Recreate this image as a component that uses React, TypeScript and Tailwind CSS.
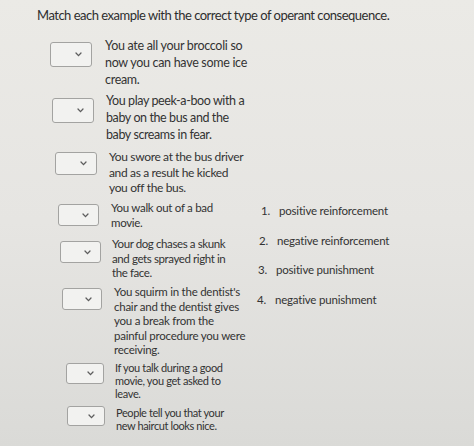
import React from "react";

const items = [
  {
    row: "h-[55px]",
    box: "ml-[50px] mt-[5px] w-[42px] h-[25px]",
    text: "ml-[13px] text-[12.5px] tracking-[-0.3px] leading-[17px]",
    lines: ["You ate all your broccoli so", "now you can have some ice", "cream."],
  },
  {
    row: "h-[57px]",
    box: "ml-[52px] mt-[6px] w-[42px] h-[25px]",
    text: "ml-[12px] text-[12.5px] tracking-[-0.4px] leading-[17px]",
    lines: ["You play peek-a-boo with a", "baby on the bus and the", "baby screams in fear."],
  },
  {
    row: "h-[52px]",
    box: "ml-[55px] mt-[3px] w-[42px] h-[23px]",
    text: "ml-[12px] text-[12px] tracking-[-0.35px] leading-[15.5px]",
    lines: ["You swore at the bus driver", "and as a result he kicked", "you off the bus."],
  },
  {
    row: "h-[36px]",
    box: "ml-[58px] mt-[3px] w-[41px] h-[22px]",
    text: "ml-[12px] text-[11.5px] tracking-[-0.3px] leading-[14.5px]",
    lines: ["You walk out of a bad", "movie."],
  },
  {
    row: "h-[48px]",
    box: "ml-[60px] mt-[4px] w-[41px] h-[22px]",
    text: "ml-[11px] text-[11.5px] tracking-[-0.4px] leading-[14.5px]",
    lines: ["Your dog chases a skunk", "and gets sprayed right in", "the face."],
  },
  {
    row: "h-[76px]",
    box: "ml-[62px] mt-[3px] w-[40px] h-[22px]",
    text: "ml-[12px] text-[11.5px] tracking-[-0.25px] leading-[14.5px]",
    lines: [
      "You squirm in the dentist's",
      "chair and the dentist gives",
      "you a break from the",
      "painful procedure you were",
      "receiving.",
    ],
  },
  {
    row: "h-[45px]",
    box: "ml-[66px] mt-[2px] w-[38px] h-[21px]",
    text: "ml-[11px] text-[11px] tracking-[-0.35px] leading-[13px]",
    lines: ["If you talk during a good", "movie, you get asked to", "leave."],
  },
  {
    row: "h-[40px]",
    box: "ml-[67px] mt-[0px] w-[38px] h-[20px]",
    text: "ml-[11px] text-[11px] tracking-[-0.4px] leading-[13px]",
    lines: ["People tell you that your", "new haircut looks nice."],
  },
];

const answers = [
  { n: "1.", text: "positive reinforcement", cls: "ml-[261px]" },
  { n: "2.", text: "negative reinforcement", cls: "ml-[259px]" },
  { n: "3.", text: "positive punishment", cls: "ml-[258px]" },
  { n: "4.", text: "negative punishment", cls: "ml-[257px]" },
];

function Chevron() {
  return (
    <svg width="7" height="5" viewBox="0 0 7 5" className="mr-[9px]">
      <path d="M1 1 L3.5 3.6 L6 1" fill="none" stroke="#5e5e5e" strokeWidth="1.3" strokeLinecap="round" />
    </svg>
  );
}

export default function App() {
  return (
    <div
      className="w-[474px] h-[446px] overflow-hidden bg-gradient-to-b from-[#ebeae6] via-[#e6e5e2] to-[#dadad7] text-[#333333]"
      style={{ fontFamily: "Lato, 'Open Sans', sans-serif" }}
    >
      <div className="pl-[37px] pt-[6px] h-[37px] text-[13px] tracking-[-0.5px] leading-[18px] text-[#2e2e2e]">
        Match each example with the correct type of operant consequence.
      </div>

      <div className="relative">
        <div className="flex flex-col">
          {items.map((it, i) => (
            <div key={i} className={`flex items-start ${it.row}`}>
              <div
                className={`flex items-center justify-end shrink-0 rounded-[3px] border border-[#a3a3a1] bg-[#f2f2f0] ${it.box}`}
              >
                <Chevron />
              </div>
              <div className={it.text}>
                {it.lines.map((l, j) => (
                  <div key={j} className="whitespace-nowrap">
                    {l}
                  </div>
                ))}
              </div>
            </div>
          ))}
        </div>

        {/* answer list on the right */}
        <div className="absolute left-0 top-[166px] flex flex-col">
          {answers.map((a) => (
            <div
              key={a.n}
              className={`flex h-[29.5px] text-[11.5px] tracking-[-0.2px] leading-[16px] ${a.cls}`}
            >
              <span className="w-[18px]">{a.n}</span>
              <span>{a.text}</span>
            </div>
          ))}
        </div>
      </div>
    </div>
  );
}
